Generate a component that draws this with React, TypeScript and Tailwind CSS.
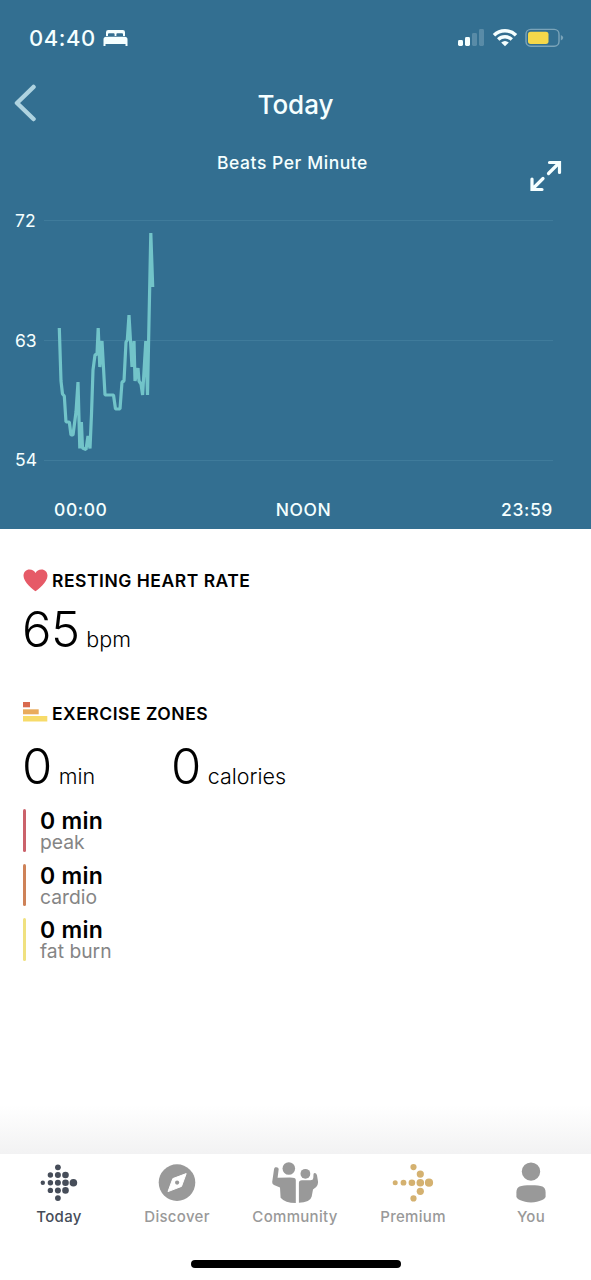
import type { ReactNode } from 'react'

interface Zone {
  name: string
  minutes: number
  color: string
}

interface NavItem {
  label: string
  icon: ReactNode
  textColor: string
}

const zones: Zone[] = [
  { name: 'peak', minutes: 0, color: 'bg-[#cb626b]' },
  { name: 'cardio', minutes: 0, color: 'bg-[#ce8258]' },
  { name: 'fat burn', minutes: 0, color: 'bg-[#f0e180]' },
]

// [x, y] in chart units
const heartRate = [
  [15.3, 118], [17, 171], [18.5, 184], [20.3, 186], [22, 212], [25.3, 212], [27, 225], [29, 225],
  [32, 202], [34, 172], [35.8, 238.5], [37.4, 212], [38.5, 238], [42, 239.5], [44, 226], [46, 238.5],
  [47.5, 204], [49, 160], [51, 145], [53, 144], [54.2, 118], [55.8, 157], [58, 131], [61, 185],
  [69.5, 185], [71.5, 199], [76, 199], [78, 172], [80, 171], [82, 132], [83.3, 130], [85, 105],
  [88, 157], [90, 131], [91, 171], [94, 158], [95, 171], [97, 174], [98.6, 185], [101.8, 131],
  [103.5, 185], [106.8, 23], [108.7, 77],
]

function StatusBar() {
  return (
    <div className="flex h-[76px] items-center justify-between pl-[29px] pr-[27px]">
      <div className="flex items-center gap-[7px]">
        <span className="text-[22px] font-medium leading-none tracking-[0.55px]">04:40</span>
        <svg width="25" height="18" viewBox="0 0 25 18" fill="currentColor">
          <path d="M3 7V3.2Q3 1 5.2 1H19.8Q22 1 22 3.2V7H20V5.2Q20 4.2 19 4.2H14.3Q13.4 4.2 13.4 5.2V7H11.6V5.2Q11.6 4.2 10.7 4.2H6Q5 4.2 5 5.2V7Z" />
          <path d="M.5 17V10.5Q.5 7.8 3.3 7.8H21.7Q24.5 7.8 24.5 10.5V17H22.5V15H2.5V17Z" />
        </svg>
      </div>
      <div className="flex items-center">
        <svg width="27" height="20" viewBox="0 0 27 20" fill="currentColor">
          <rect x="0" y="12" width="5" height="6" rx="1.4" />
          <rect x="7" y="9" width="5" height="9" rx="1.4" />
          <rect x="14" y="5" width="5" height="13" rx="1.4" opacity=".2" />
          <rect x="21" y="1" width="5" height="17" rx="1.4" opacity=".2" />
        </svg>
        <svg className="ml-[7px]" width="26" height="20" viewBox="0 0 26 20" fill="none" stroke="currentColor">
          <path d="M2 7.2C8.1 1.3 17.9 1.3 24 7.2" strokeWidth="3.5" />
          <path d="M6.2 11.5C10 7.8 16 7.8 19.8 11.5" strokeWidth="3.4" />
          <path d="M13 18.3L9.2 14.6Q13 11.6 16.8 14.6Z" fill="currentColor" stroke="none" />
        </svg>
        <svg className="ml-[7px]" width="39" height="20" viewBox="0 0 39 20">
          <rect x="1" y="1.4" width="33" height="16.8" rx="4.8" fill="none" stroke="#7ba4b9" strokeWidth="1.4" />
          <rect x="3" y="3.7" width="20.5" height="12.2" rx="2.6" fill="#f5d84a" />
          <path d="M35.8 7Q38.2 8 38.2 9.8T35.8 12.6Z" fill="#7ba4b9" />
        </svg>
      </div>
    </div>
  )
}

function HeartRateChart() {
  return (
    <div>
      <div className="flex h-[260px] pl-[15px]">
        <div className="flex w-[29px] flex-col justify-between pt-px text-[17.5px] leading-5">
          <span>72</span>
          <span>63</span>
          <span>54</span>
        </div>
        <svg width="510" height="260" viewBox="0 0 510 260" fill="none">
          <path d="M0 10.5H509M0 130.5H509M0 250.5H509" stroke="#3f7b9b" />
          <polyline
            points={heartRate.map((point) => point.join(',')).join(' ')}
            stroke="#72c4c9"
            strokeWidth="3.2"
            strokeLinejoin="bevel"
          />
        </svg>
      </div>
      <div className="mt-[29px] grid grid-cols-3 pl-[54px] pr-[38px] text-[17.5px] font-medium leading-[22px] tracking-[0.6px]">
        <span>00:00</span>
        <span className="text-center">NOON</span>
        <span className="text-right">23:59</span>
      </div>
    </div>
  )
}

function Header() {
  return (
    <header className="h-[529px] bg-[#336f91] text-[#f5ffff]">
      <StatusBar />
      <div className="grid h-[58px] grid-cols-3 items-center px-[14px]">
        <svg className="-mt-1" width="23" height="38" viewBox="0 0 23 38" fill="none">
          <path d="M19.5 3L3 19L19.5 35" stroke="#afd3e0" strokeWidth="4.5" strokeLinecap="round" strokeLinejoin="round" />
        </svg>
        <h1 className="text-center text-[26px] font-medium leading-8">Today</h1>
      </div>
      <div className="grid h-[76px] grid-cols-[1fr_auto_1fr] pl-[23px] pr-[29px]">
        <h2 className="col-start-2 mt-[17px] text-[17.5px] font-medium leading-6 tracking-[0.55px]">Beats Per Minute</h2>
        <svg className="mt-[26px] justify-self-end" width="32" height="32" viewBox="0 0 32 32" fill="none" stroke="currentColor" strokeWidth="3.2" strokeLinecap="round" strokeLinejoin="miter">
          <path d="M19.5 2.5H29.5V12.5M29 3L18.5 13.5" />
          <path d="M2 19V29.5H12M2.5 29L13 18.5" />
        </svg>
      </div>
      <HeartRateChart />
    </header>
  )
}

function Metric({ value, unit }: { value: number; unit: string }) {
  return (
    <div className="-mt-px flex h-[61px] items-baseline gap-[7px]">
      <span className="-ml-px text-[49px] font-light leading-[61px] tracking-[-0.6px]">{value}</span>
      <span className="text-[21.5px] font-light">{unit}</span>
    </div>
  )
}

function RestingHeartRate() {
  return (
    <section>
      <div className="flex items-center gap-1">
        <svg width="25" height="24" viewBox="0 0 25 24" fill="#e65a67">
          <path d="M12.5 22.2C10.5 21.2 .5 13.5 .5 6.8C.5 2.8 3.2 .5 6.5 .5C9.3 .5 11.4 1.9 12.5 4.1C13.6 1.9 15.7 .5 18.5 .5C21.8 .5 24.5 2.8 24.5 6.8C24.5 13.5 14.5 21.2 12.5 22.2Z" />
        </svg>
        <h3 className="pt-px text-[17.5px] font-semibold leading-6 tracking-[0.52px]">RESTING HEART RATE</h3>
      </div>
      <div className="mt-[7px]">
        <Metric value={65} unit="bpm" />
      </div>
    </section>
  )
}

function ExerciseZones() {
  return (
    <section className="mt-[42px]">
      <div className="flex items-center gap-1">
        <svg className="-mt-1" width="25" height="20" viewBox="0 0 25 20">
          <path fill="#d8694e" d="M0 0H7V5.3H0Z" />
          <path fill="#e9ab5c" d="M0 7.3H15.7V12.3H0Z" />
          <path fill="#f7db69" d="M0 14H24.3V19.5H0Z" />
        </svg>
        <h3 className="text-[17.5px] font-semibold leading-6 tracking-[0.52px]">EXERCISE ZONES</h3>
      </div>
      <div className="mt-[11px] grid grid-cols-[149px_1fr]">
        <Metric value={0} unit="min" />
        <Metric value={0} unit="calories" />
      </div>
      <ul className="mt-[12px] flex flex-col gap-3">
        {zones.map((zone) => (
          <li key={zone.name} className="flex h-[42.5px] gap-[14px]">
            <div className={`w-[3px] rounded-full ${zone.color}`} />
            <div>
              <p className="text-[23px] font-semibold leading-6 tracking-[0.25px]">{zone.minutes} min</p>
              <p className="-mt-[1px] text-[19.3px] leading-5 text-[#858585]">{zone.name}</p>
            </div>
          </li>
        ))}
      </ul>
    </section>
  )
}

function TodayIcon() {
  return (
    <svg width="38" height="38" viewBox="0 0 38 38" fill="currentColor">
      <circle cx="2.8" cy="18.7" r="2.2" />
      <circle cx="10.4" cy="11" r="2.7" />
      <circle cx="10.4" cy="18.7" r="2.7" />
      <circle cx="10.4" cy="26.4" r="2.7" />
      <circle cx="17.9" cy="3.3" r="2.9" />
      <circle cx="17.9" cy="11" r="3" />
      <circle cx="17.9" cy="18.7" r="3" />
      <circle cx="17.9" cy="26.4" r="3" />
      <circle cx="17.9" cy="34.1" r="2.9" />
      <circle cx="25.5" cy="11" r="3.3" />
      <circle cx="25.5" cy="18.7" r="3.3" />
      <circle cx="25.5" cy="26.4" r="3.3" />
      <circle cx="33.4" cy="18.7" r="3.8" />
    </svg>
  )
}

function DiscoverIcon() {
  return (
    <svg width="38" height="38" viewBox="0 0 38 38">
      <circle cx="19" cy="18.6" r="18.3" fill="#999" />
      <path d="M28.2 9.6L23.5 22.4L10 27.6L14.8 14.6Z" fill="white" stroke="white" strokeLinejoin="round" />
      <circle cx="19.1" cy="18.6" r="2.1" fill="#999" />
    </svg>
  )
}

function CommunityIcon() {
  return (
    <svg width="46" height="42" viewBox="0 0 46 42" fill="#999">
      <circle cx="16.8" cy="6.5" r="6.3" />
      <circle cx="33.4" cy="11.8" r="4.9" />
      <path d="M3.3 5.3Q6.5 4.8 6.7 7L5.6 15.7L18 15.6Q23.8 15.6 23.8 18V41Q13 41 8.6 35.8L8 25.5L2 23Q0 22.2 .2 20L2 7.5Q2.2 5.8 3.3 5.3Z" />
      <path d="M26.9 40.7V21Q26.9 18.3 30 18.3H38.5Q41.2 18.2 41.3 16L41.5 12.2Q41.6 10.9 43 10.9Q44.5 11 45 13.2L46 19.5Q46.2 23.5 44.2 25L41 27.4L39.7 34.5Q39 37.5 35.8 39Q32 40.7 26.9 40.7Z" />
    </svg>
  )
}

function PremiumIcon() {
  return (
    <svg width="42" height="38" viewBox="0 0 42 38" fill="#d4b170">
      <circle cx="3.2" cy="18.7" r="2.5" />
      <circle cx="11.5" cy="18.7" r="2.9" />
      <circle cx="19.9" cy="18.7" r="3.3" />
      <circle cx="28.3" cy="18.7" r="3.8" />
      <circle cx="37" cy="18.7" r="4.1" />
      <circle cx="21.5" cy="3.1" r="3.1" />
      <circle cx="28.3" cy="10.1" r="3.6" />
      <circle cx="28.3" cy="27.3" r="3.6" />
      <circle cx="21.5" cy="34.4" r="3.1" />
    </svg>
  )
}

function YouIcon() {
  return (
    <svg width="30" height="42" viewBox="0 0 30 42" fill="#999">
      <circle cx="15" cy="9.6" r="9.2" />
      <path d="M15 23.2C26 23.2 29.6 24.3 29.6 30.6V34.6C29.6 37.1 23.5 40.4 15 40.4S.4 37.1 .4 34.6V30.6C.4 24.3 4 23.2 15 23.2Z" />
    </svg>
  )
}

const navItems: NavItem[] = [
  { label: 'Today', icon: <TodayIcon />, textColor: 'text-[#464d59]' },
  { label: 'Discover', icon: <DiscoverIcon />, textColor: 'text-[#999]' },
  { label: 'Community', icon: <CommunityIcon />, textColor: 'text-[#999]' },
  { label: 'Premium', icon: <PremiumIcon />, textColor: 'text-[#999]' },
  { label: 'You', icon: <YouIcon />, textColor: 'text-[#999]' },
]

function BottomNav() {
  return (
    <nav className="h-[126px] bg-white">
      <div className="grid w-[590px] grid-cols-5 pt-[7px]">
        {navItems.map((item) => (
          <button key={item.label} className={`flex flex-col items-center ${item.textColor}`}>
            <span className="flex h-[43px] items-center">{item.icon}</span>
            <span className="mt-[3px] text-[15px] font-medium leading-5 tracking-[0.3px]">{item.label}</span>
          </button>
        ))}
      </div>
      <div className="ml-[190.5px] mt-[33px] h-2 w-[210.5px] rounded-full bg-black" />
    </nav>
  )
}

export default function App() {
  return (
    <div className="flex h-[1280px] w-[591px] flex-col overflow-hidden bg-white font-['Inter',sans-serif] text-black">
      <Header />
      <main className="flex-1 pl-[23px] pt-[39px]">
        <RestingHeartRate />
        <ExerciseZones />
      </main>
      <div className="h-[49px] bg-linear-to-b from-white to-[#f2f2f3]" />
      <BottomNav />
    </div>
  )
}
